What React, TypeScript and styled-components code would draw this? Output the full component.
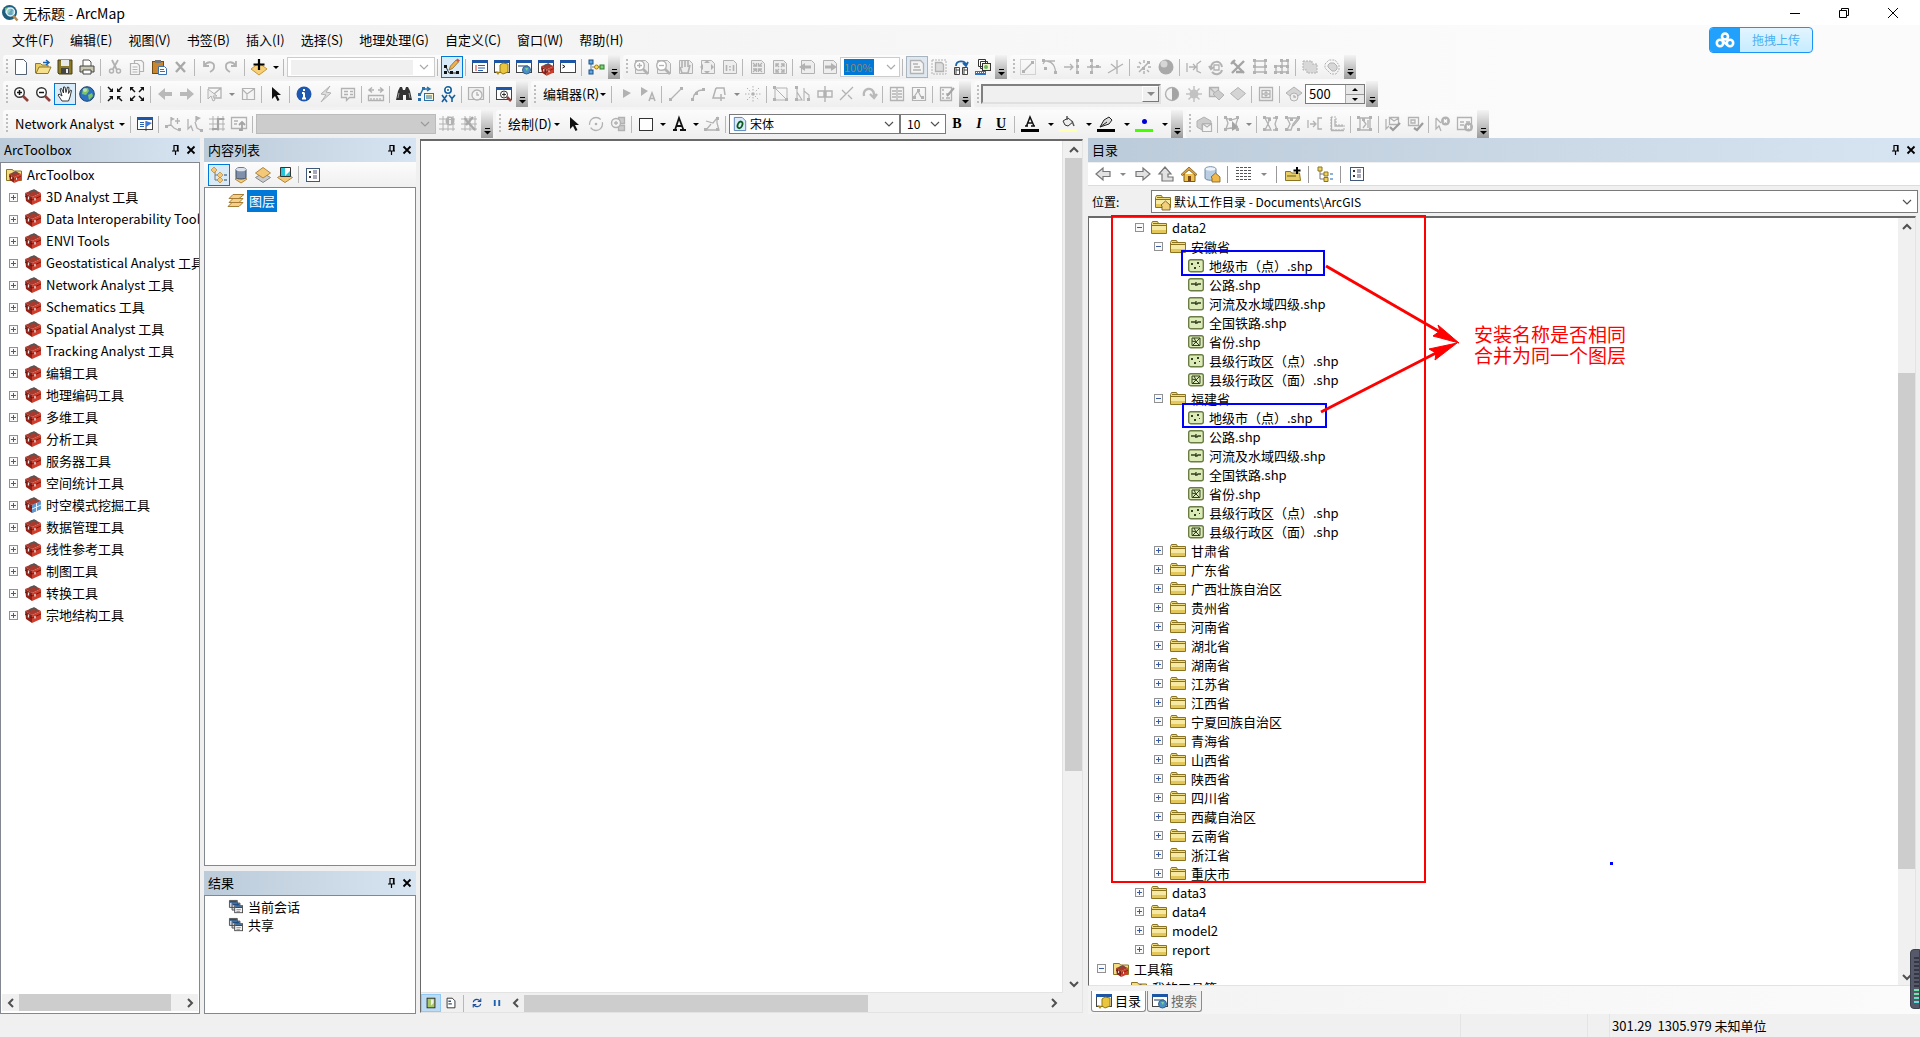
import React from 'react';
import styled, { createGlobalStyle, css } from 'styled-components';

const Global = createGlobalStyle`
  *, *::before, *::after { box-sizing: border-box; }
  body { margin: 0; background: #f0f0f0; overflow: hidden; }
  body, button, select, input {
    font-family: "Noto Sans CJK SC", "Noto Sans", sans-serif;
    font-size: 13px;
    line-height: 18px;
    color: #000;
  }
  button { border: 0; padding: 0; background: none; }
  ul { list-style: none; margin: 0; padding: 0; }
  svg { display: block; flex: none; }
`;

/* ---------- icons ---------- */

const G = '#b2b2b2';
const L = '#d8d8d8';
const line = (d: string, stroke = G, w = 1.3, fill = 'none') => (
  <path d={d} stroke={stroke} strokeWidth={w} fill={fill} />
);
const dots = (pts: number[][], fill = G, s = 3) => (
  <>{pts.map(([x, y], i) => <rect key={i} x={x} y={y} width={s} height={s} fill={fill} />)}</>
);
const win = (
  <>
    <rect x=".5" y="1.5" width="15" height="12" fill="#fff" stroke="#444" />
    <rect x="0" y="1" width="16" height="3" fill="#1d56a5" />
  </>
);
const folder = (
  <>
    <path d="M.5 13.5V3.5l1-2h5l1 2h8v10z" fill="#f0dc82" stroke="#8a7420" />
    <path d="M1 5.500h14M2 3.500h13" stroke="#8a7420" />
    <path d="M1 6h14v4H1z" fill="#f6e9a4" />
    <path d="M1 10h14v3H1z" fill="#e3c75a" />
  </>
);
const toolbox = (
  <>
    <path d="M0 4l9-3.500L16 4 7 8z" fill="#a8392c" />
    <path d="M0 4l7 4v8l-6-4z" fill="#8f2117" />
    <path d="M7 8l9-4v8l-9 4z" fill="#cf3e2c" />
    <path d="M7 11l9-4" stroke="#7c1a10" />
    <path d="M0 7l7 4" stroke="#5f130c" />
    <path d="M5 4.500V2.500L9 1l2 1v2" fill="none" stroke="#555" strokeWidth="1.300" />
    <path d="M3.500 7.500v3M10 9v2.500" stroke="#e6e6e6" strokeWidth="1.400" />
  </>
);
const shpBox = <rect x=".7" y="1.700" width="14.600" height="12" rx="2" fill="#dcebb8" stroke="#6a7d45" strokeWidth="1.400" />;
const mag = (c: string, s: string, mid: React.ReactNode) => (
  <>
    <circle cx="6.500" cy="6.500" r="4.800" fill="#fff" stroke={c} strokeWidth="1.400" />
    <path d="M10 10l5 5" stroke={s} strokeWidth="2.600" />
    {mid}
  </>
);
const page = <path d="M2.500 1.500h10l3 3v10h-13z" fill="#eee" stroke={G} />;
const grid = line('M4 0v15M9 0v15M14 0v15M0 3h16M0 8h16M0 13h16', G, 1);
const poly = line('M2 2l5 2 7-2-2 6 2 5-7-1-5 1 2-6z', G);
const polyDots = dots([[0, 0], [12, 0], [0, 12], [12, 12], [5, 2]]);
const pointer = (c: string) => <path d="M4 1v12l3-3 2.500 5 2-1-2.500-5H13z" fill={c} />;
const optionsList = (
  <>
    <rect x="1.500" y="1.500" width="13" height="13" fill="#fff" stroke="#3d5878" />
    <path d="M4 5h2M4 10h2" stroke="#333" strokeWidth="2" />
    <path d="M8 4h4M8 6h4M8 9h4M8 11h4" stroke="#557" />
  </>
);

const ICONS: Record<string, React.ReactNode> = {
  logo: <><circle cx="7.500" cy="7.500" r="7.500" fill="#1e5f7d" /><path d="M3 3l4-1 2 3-3 4-3-1zM10 6l3 1-2 4z" fill="#71bf7c" /><circle cx="8.500" cy="7" r="4" fill="#9fd3ee" fillOpacity=".6" stroke="#dff1fa" strokeWidth="1.500" /><path d="M11 10.500l4.500 5" stroke="#b08a5a" strokeWidth="2.500" /></>,
  new: <path d="M2.500.5h8l3 3v12h-11z" fill="#fdfeff" stroke="#536273" />,
  open: <><path d="M.5 14V4.500h5L7 6h6v3" fill="#e8cc68" stroke="#8f7927" /><path d="M1 14.500L4 8h12l-3 6.500z" fill="#f6df8d" stroke="#8f7927" /><path d="M8 3.500h5M11 1l3 2.500L11 6" fill="none" stroke="#1d62ae" strokeWidth="1.500" /></>,
  save: <><path d="M1 1h14v14H2l-1-1z" fill="#8b7a28" stroke="#453d15" /><rect x="4" y="1" width="8" height="6" fill="#e8e8e8" /><rect x="4" y="9" width="8" height="6" fill="#444" /><rect x="9" y="10" width="2" height="4" fill="#eee" /></>,
  print: <><path d="M4 7V1h6l2 2v4" fill="#fff" stroke="#555" /><path d="M1 7h14v6H1z" fill="#c9c7b0" stroke="#444" /><path d="M4 11h8v4H4z" fill="#fff" stroke="#444" /></>,
  cut: <>{line('M5 1l5 10M11 1L6 10', G, 1.8)}<circle cx="4.500" cy="12" r="2" fill="none" stroke={G} strokeWidth="1.500" /><circle cx="11.500" cy="12" r="2" fill="none" stroke={G} strokeWidth="1.500" /></>,
  copy: <>{line('M5.500 1.500h7l2 2v9h-9z', G, 1.2, '#f6f6f6')}{line('M1.500 4.500h7l2 2v9h-9zM3.500 8h5M3.500 10.500h5M3.500 13h5', G, 1.2, '#f6f6f6')}</>,
  paste: <><rect x="1.500" y="2.500" width="11" height="12" fill="#c9862c" stroke="#6e4b17" /><rect x="4" y="1" width="6" height="3" fill="#777" /><path d="M7.500 7.500h6l2 2v6h-8z" fill="#fff" stroke="#3e6fae" /><path d="M9 10.500h4M9 12.500h5" stroke="#3e6fae" /></>,
  delete: line('M3 3l9 10M12 3L3 13', '#a9a9a9', 2.4),
  undo: line('M3 2v5h5M3 7c4-6 11-4 10 1 0 2-2 4-4 5', G, 1.8),
  redo: line('M13 2v5H8M13 7C9 1 2 3 3 8c0 2 2 4 4 5', G, 1.8),
  addData: <><path d="M8 4l8 6-8 6-8-6z" fill="#f6cf76" stroke="#c9963a" /><path d="M8 0v11M2.500 5.500h11" stroke="#000" strokeWidth="2.200" /></>,
  editorTool: <><path d="M2 8l3 6h8" stroke="#333" fill="none" />{dots([[0, 12], [6, 12], [12, 12], [0, 6]], '#111')}<path d="M5 11l1.500-4L12 1l2.500 2-6 6.500z" fill="#efb14b" stroke="#7e5a23" strokeWidth=".7" /><path d="M12 1l1.500-1.500L16 1.500 14.500 3z" fill="#d25548" /></>,
  tableWin: <>{win}<path d="M3 7h2M3 9h2M3 11h2" stroke="#d33" /><path d="M6 6.500h7M6 9h7M6 11.500h5" stroke="#2b62b0" /></>,
  catalogWin: <>{win}<path d="M6 6l3-2 5 1v8l-5 2-3-2z" fill="#e9c63e" stroke="#937a13" /><path d="M1 12l5 1-2 3z" fill="#b08a17" /></>,
  searchWin: <>{win}<path d="M2 7h10" stroke="#8a9ab0" strokeWidth="2" /><circle cx="10.500" cy="11" r="4" fill="#4a90c8" stroke="#36628a" /><path d="M9 9l3 0-1 3z" fill="#7ed08a" /></>,
  toolboxWin: <>{win}<g transform="translate(3 4) scale(.8)">{toolbox}</g></>,
  pythonWin: <>{win}<path d="M2.500 6l2.500 1.500L2.500 9" stroke="#111" fill="none" /></>,
  model: <><path d="M3 3v10M4 8h9" stroke="#5b7f9f" /><rect x="1" y="1" width="4" height="4" fill="#5fa8e8" stroke="#1d4f86" /><rect x="1" y="11" width="4" height="4" fill="#5fa8e8" stroke="#1d4f86" /><circle cx="8.500" cy="8" r="2" fill="#ffd84f" stroke="#a58012" /><rect x="12" y="6" width="4" height="4" fill="#7fd07c" stroke="#2f7d2d" /></>,
  gZoomIn: <>{page}{mag(G, G, line('M4 6.500h5M6.500 4v5'))}</>,
  gZoomOut: <>{page}{mag(G, G, line('M4 6.500h5'))}</>,
  gPan: <>{page}{line('M3 8l2 6h6l2-8M5 9V2M8 8V1M11 8V2', G, 1.6)}</>,
  gFull: <>{page}<path d="M8 1l3 3H5zM8 15l3-3H5zM1 8l3-3v6zM15 8l-3-3v6z" fill={G} /></>,
  gOne: <>{page}<path d="M5.500 6v6M12.500 6v6M9 7v1.500M9 10v1.500" stroke={G} strokeWidth="1.600" /></>,
  gIn: <>{page}{line('M4 4l3 3M13 4l-3 3M4 13l3-3M13 13l-3-3M7.500 4v3H4M9.500 4v3H13M7.500 13v-3H4M9.500 13v-3H13')}</>,
  gOut: <>{page}{line('M5 5l3 3M13 5l-3 3M5 13l3-3M13 13l-3-3M5 8V5h3M10 5h3v3M5 10v3h3M13 10v3h-3')}</>,
  gPrev: <>{page}<path d="M0 8l6-4v2.500h6v3H6V12z" fill={G} /></>,
  gNext: <>{page}<path d="M16 8l-6-4v2.500H4v3h6V12z" fill={G} /></>,
  gToggle: line('M1.500 1.500h10l3 3v10h-13zM4 5h5M4 11h8M5 8h6', G, 1.3, '#f4f4f4'),
  gFocus: <><rect x="1" y="1" width="14" height="14" fill="none" stroke={G} strokeDasharray="2 1" />{line('M4.500 3.500h6l2 2v7h-8z', G, 1.3, '#ddd')}</>,
  change: <><path d="M3 7c0-6 9-6 10-1M10 4l3 3 2-4" fill="none" stroke="#1d62ae" strokeWidth="1.800" /><path d="M1.500 8.500h5v7h-5zM9.500 8.500h5v7h-5zM3 8.500v7M11 8.500v7M3 11h3M11 11h3" fill="#fff" stroke="#444" /></>,
  ddp: <><path d="M3.500.5h7v7h-7zM5.500 2.500h7v7h-7z" fill="#fff" stroke="#333" /><rect x="7.500" y="4.500" width="8" height="7" fill="#f1f6c8" stroke="#333" /><circle cx="11" cy="8" r="2" fill="#6cb865" /><rect x="0" y="12" width="11" height="4" fill="#2b72c8" /><path d="M1 13.500h9" stroke="#fff" strokeDasharray="1 1" /></>,
  feLine: <><rect x=".5" y=".5" width="15" height="15" fill="none" stroke={G} strokeDasharray="1 1" />{line('M4 12l8-8')}{dots([[2, 11], [11, 2]])}</>,
  feArc: <>{line('M1 2h12M5 2c6 1 8 5 9 13M1 5l2-3')}{dots([[0, 0], [2, 8], [12, 12]])}</>,
  feSnap: <>{line('M0 8h8M6 5l3 3-3 3M13 1v14')}{dots([[12, 0], [12, 6], [12, 12]])}</>,
  feCross: <>{line('M1 8h14M6 1v14')}{dots([[4, 6], [10, 6], [4, 0], [4, 12]])}</>,
  feTrim: <>{line('M0 14L15 5M9 1v14M3 5l5 4')}</>,
  feBurst: <><g stroke={G} strokeWidth="1.500"><path d="M8 1v3M1 8h3M8 12v3M12 8h3M3 3l2 2M11 11l2 2M3 13l9-9" /></g>{dots([[11, 2], [6, 8]])}</>,
  feBall: <><circle cx="8" cy="8" r="7.500" fill="#a9a9a9" /><circle cx="6" cy="5" r="3.500" fill="#d6d6d6" /></>,
  feMove: <>{line('M1 4v9M3 8h6M7 5l3 3-3 3M15 2l-4 3v7l4 2')}</>,
  feRotate: <>{line('M3 9c0-8 10-8 11-1M4 13c4 4 9 2 10-2M1 7l2 3 3-2', G, 2)}{line('M6 6h5v5H6z')}</>,
  feTools: line('M2 2l12 12M14 2L2 14M1 5l4-4M6 13h8', '#a4a4a4', 2.4),
  feAlign: <>{line('M2 2h12M2 8h12M2 13h12M3 2v11M13 2v11')}{dots([[1, 0], [12, 0], [1, 6], [12, 6], [1, 12], [12, 12]])}</>,
  feGrid: <>{line('M2 7h12M2 13h12M8 2v12M2 7v7M14 2v12M8 2h6')}{dots([[6, 0], [12, 0], [0, 6], [6, 6], [12, 6], [0, 12], [6, 12], [12, 12]])}</>,
  feUnion: <path d="M1 2h9v3h5v9H5v-3H1z" fill={L} stroke={G} strokeDasharray="2 1" />,
  feBuffer: <><path d="M1 5l4-4h6l4 5v5l-3 4H7L1 9z" fill="none" stroke={G} strokeDasharray="2 1" /><path d="M4 6l2-2h4l3 3v3l-2 2H8L4 8z" fill={L} stroke={G} /></>,
  zoomIn: mag('#333', '#8f3f3a', line('M4 6.500h5M6.500 4v5', '#111', 1.5)),
  zoomOut: mag('#333', '#8f3f3a', line('M4 6.500h5', '#111', 1.5)),
  pan: <path d="M5 15L1 9l1-1 3 2-2-7 1.500-.5L6.500 7 6.500 1 8 1l1 5.500L10.500 1l1.500.5-.5 6L13.500 4l1 .5L13 11l-1.500 4z" fill="#fff" stroke="#222" strokeWidth=".9" />,
  globe: <><circle cx="8" cy="8" r="7.300" fill="#2c72c4" stroke="#1a4172" /><path d="M4 3l5-1 1 3-3 4-4-1zM9 9l4-2 1 3-4 4z" fill="#7fc55d" /><circle cx="6" cy="4" r="2" fill="#fff" fillOpacity=".5" /></>,
  fixIn: <g fill="#111" stroke="#111"><path d="M1 1l4 4M15 1l-4 4M1 15l4-4M15 15l-4-4" strokeWidth="1.500" /><path d="M6 2v4H2zM10 2v4h4zM6 14v-4H2zM10 14v-4h4z" stroke="none" /></g>,
  fixOut: <g fill="#111" stroke="#111"><path d="M2 2l4 4M14 2l-4 4M2 14l4-4M14 14l-4-4" strokeWidth="1.500" /><path d="M1 5V1h4zM15 5V1h-4zM1 11v4h4zM15 11v4h-4z" stroke="none" /></g>,
  prev: <path d="M1 8l7-6v4h7v4H8v4z" fill="#b9b9b9" />,
  next: <path d="M15 8L8 2v4H1v4h7v4z" fill="#b9b9b9" />,
  gSelect: <>{line('M1 2h13v10H7M14 2L7 8')}<path d="M1 3v10l3-3 2 5 2-1-2-4h4z" fill="#eee" stroke={G} /></>,
  gClear: line('M2.500 2.500h12v11h-12zM2 3l5 5 7-5M7 8v5', G, 1.2, '#f4f4f4'),
  pointer: pointer('#111'),
  info: <><circle cx="8" cy="8" r="7.500" fill="#1d57b0" /><path d="M8 6.500V13M6 7h2M6 12.500h4M8 3v2" stroke="#fff" strokeWidth="2" /></>,
  bolt: <path d="M12 0L3 8l5 1-5 7 10-9-5-1z" fill="#ddd" stroke={G} />,
  popup: line('M1.500 2.500h13v9h-5l-3 3v-3h-5zM4 5.500h4M4 8.500h4M10 5.500h3M10 8.500h3', G, 1.3),
  measure: <>{line('M1 4h5M10 4h5M4 1.500L1 4l3 2.500M12 1.500L15 4l-3 2.500', G, 1.5)}{line('M.5 9.500h15v5H.5zM3 12v2M6 12v2M9 12v2M12 12v2')}</>,
  find: <><path d="M2 5l2-4h2l1 3h2l1-3h2l2 4 2 9h-6V9H7v5H0z" fill="#333" /><path d="M2 12l1-5M13 7l1 5" stroke="#999" /></>,
  route: <><path d="M2 9l3-6h6M9 1l3 2-3 2" fill="none" stroke="#2a6fa8" strokeWidth="1.500" /><rect x="6.500" y="7.500" width="9" height="7" fill="#fdf6cf" stroke="#2a6fa8" /><path d="M8 10h6M8 12h6" stroke="#2a6fa8" />{dots([[0, 7], [0, 12], [4, 1]], '#2a6fa8')}</>,
  goXY: <><circle cx="8" cy="4" r="3.200" fill="#fff" stroke="#16609f" strokeWidth="1.600" /><circle cx="8" cy="4" r="1" fill="#16609f" /><path d="M2 9l5 7M7 9l-5 7M9 9l3 3.500L15 9M12 12v4" stroke="#16609f" strokeWidth="1.600" fill="none" /></>,
  clockWin: <>{line('M.5 1.500h15v12H.5z', G, 1.2, '#eee')}<circle cx="9" cy="9" r="5" fill="#f5f5f5" stroke={G} strokeWidth="1.300" />{line('M9 6v3h2')}</>,
  magWin: <>{win}<circle cx="8" cy="8.500" r="3.500" fill="#fff" stroke="#333" /><path d="M6 8.500h4M8 6.500v4" stroke="#333" /><path d="M11 11l4 4" stroke="#8f3f3a" strokeWidth="2.500" /></>,
  gArrow: <path d="M5 3v9l8-5z" fill={G} />,
  gArrowA: <><path d="M1 1v9l7-5z" fill={G} />{line('M9 15l3-8 3 8M10 12.500h4', G, 1.5)}</>,
  gLine: <>{line('M3 13L13 3')}{dots([[1, 12], [12, 1]])}</>,
  gCurve: <>{line('M3 13c1-6 4-9 10-9')}{dots([[1, 12], [12, 2], [5, 6]])}</>,
  gTrace: line('M4 2h8l1 7M4 2L1 12h6M9 8v7M6 12h7', G, 1.5),
  gPoint: <><circle cx="8" cy="8" r="1.800" fill={G} /><g stroke={G} strokeDasharray="1.500 1.500"><path d="M8 0v5M8 11v5M0 8h5M11 8h5M2 2l4 4M10 10l4 4M14 2l-4 4M2 14l4-4" /></g></>,
  gEditV: <>{line('M2 14V2l12 12H2M2 2h12v12', G, 1)}{dots([[0, 0], [0, 12], [12, 12]])}</>,
  gReshape: <>{line('M2 1v13h5l-5-8M9 2v13M9 5l5 4v6', G, 1.1)}{dots([[0, 0], [0, 12], [12, 12]])}</>,
  gCutP: line('M1 5h6v6H1zM9 5h6v6H9zM8 0v16', G, 1.4),
  gSplit: line('M1 14L14 1M3 4l4 4M9 9l4 4', G, 1.3),
  gRot: line('M3 10c-2-8 9-10 10-2v3M9 8l4 4 3-4', '#b9b9b9', 2.4),
  gAttr: line('M1.500 1.500h13v13h-13zM8 2v12M3 5h4M3 8h4M3 11h4M9 5h4M9 8h4M9 11h4'),
  gSketch: <>{line('M1.500 1.500h13v13h-13zM3 11l4-6 3 6', G, 1.2)}{dots([[2, 10], [6, 3], [10, 10]])}</>,
  gCreate: <>{line('M1.500 1.500h11v13h-11zM3 4h2M3 8h2M3 12h2M7 8h4M7 12h4')}{line('M8 10l7-8', '#a4a4a4', 2)}</>,
  contrast: <><circle cx="8" cy="8" r="6.500" fill="#f4f4f4" stroke={G} strokeWidth="1.400" /><path d="M8 1.500a6.500 6.500 0 010 13z" fill="#a4a4a4" /></>,
  sun: <><circle cx="8" cy="8" r="4.500" fill="#c2c2c2" />{line('M8 0v16M0 8h16M2.500 2.500l11 11M13.500 2.500l-11 11', '#c2c2c2', 1.5)}</>,
  swipe: <>{line('M1.500 1.500h9v9h-9zM2 2l9 9', G, 1.3, '#ddd')}<path d="M5 8l5-4 6 5-5 5z" fill="#ccc" stroke={G} /></>,
  diamond: <path d="M8 1.500l7.500 6L8 14 .5 7.500z" fill="#d4d4d4" stroke={G} />,
  flick: <>{line('M1.500 1.500h13v13h-13zM4 4.500h8v7H4zM4 8h8')}<path d="M8 5l2 2H6zM8 11l2-2H6z" fill={G} /></>,
  timer: <><path d="M8 1l8 6-8 6-8-6z" fill="#d4d4d4" stroke={G} /><circle cx="8" cy="11" r="4" fill="#eee" stroke={G} />{line('M8 9v2h2')}</>,
  naWin: <>{win}<path d="M3 6.500h4M3 8.500h4M3 10.500h4" stroke="#2b62b0" /><path d="M9 5v10" stroke="#444" /><path d="M9 5l6 2-6 4z" fill="#3d79d8" /></>,
  na1: <>{line('M1 10l5-1 3 3 6 3M6 9V1M10 5h5M12.500 2v6')}<path d="M6 1l4 2-4 2z" fill={G} />{dots([[0, 9], [13, 12]])}</>,
  na2: <>{line('M1 3v10l3-3 2 5M8 6l2 6 5 3M9 6V0')}<path d="M9 0l5 2-5 3z" fill={G} />{dots([[13, 13]])}</>,
  na3: <>{grid}{line('M3 13h6V3h6', '#a4a4a4', 2.2)}</>,
  na4: <>{line('M.5 1.500h15v11H.5zM3 5h4M3 8h3')}{line('M8 14h3V7M8 9l3-3 3 3', '#a4a4a4', 1.8)}</>,
  na5: <>{grid}<circle cx="11" cy="5" r="4.500" fill="#b2b2b2" /><path d="M11 4v4M11 2v1" stroke="#fff" strokeWidth="1.500" /></>,
  na6: <>{grid}{line('M5 4l9 10M4 2l3 5M12 1L5 9', '#a8a8a8', 2.4)}</>,
  rotateC: <><circle cx="8" cy="8" r="6.500" fill="none" stroke={G} strokeWidth="1.300" strokeDasharray="16 3" /><circle cx="8" cy="8" r="1.300" fill={G} /></>,
  zoomSel: <>{line('M8.500 1.500h6v6h-6zM8.500 9.500h6v5h-6z', G, 1.3, '#ccc')}<circle cx="6" cy="7" r="4.500" fill="#f4f4f4" stroke={G} strokeWidth="1.400" />{line('M4 7h4M6 5v4')}</>,
  rect: <rect x="1.500" y="2.500" width="13" height="12" fill="#fff" stroke="#333" />,
  textA: <path d="M2 14h4M9 14h6M4 14L8 2l4.500 12M5 10h6" stroke="#111" strokeWidth="1.800" fill="none" />,
  editVert: <>{line('M2 5l7 2 4-5v5l2 7H2l5-6')}{dots([[0, 12], [12, 12], [12, 1]])}</>,
  fontFile: <><path d="M1.500.5h9l4 4v11h-13z" fill="#dcebfb" stroke="#4b79b5" /><ellipse cx="8" cy="9" rx="2.500" ry="4" transform="rotate(25 8 9)" fill="none" stroke="#0b5c1e" strokeWidth="2" /></>,
  colorA: <><path d="M3 10h3M9 10h4M4.500 10L8 1l4 9M6 7h5" stroke="#111" strokeWidth="1.500" fill="none" /><rect x="-1" y="13" width="18" height="3" fill="#000" /></>,
  colorFill: <><path d="M3 5l5-3 5 4-5 4-3-1z" fill="#eee" stroke="#333" /><path d="M7 4V0M12 5l2 5" stroke="#555" strokeWidth="1.500" /><rect x="-1" y="13" width="18" height="3" fill="#ffffb4" /></>,
  colorLine: <><path d="M2 11l4-7 5-3 3 3-3 4zM2 11l7-5" fill="#ddd" stroke="#222" /><rect x="-1" y="13" width="18" height="3" fill="#000" /></>,
  colorMark: <><circle cx="8.500" cy="5.500" r="2.500" fill="#0000d8" /><rect x="-1" y="13" width="18" height="3" fill="#4f0" /></>,
  topo1: <><path d="M1 5l7-4 7 4v3H6v6l-5-3z" fill="#ccc" stroke={G} />{line('M6.500 7.500h9v8h-9zM7 8l4 3 4-3', G, 1.2, '#f4f4f4')}</>,
  topo2: <>{poly}{polyDots}<path d="M8 5v10l6-4z" fill="#a4a4a4" /></>,
  topo3: <>{line('M2 2h5l-2 6 3 6H2l3-6zM10 2h4l-2 6 2 6h-4')}{polyDots}</>,
  topo4: <>{line('M2 2h11l-5 6-2 6H2l3-6z')}{polyDots}{line('M8 10l6-7')}</>,
  topo5: line('M1 4v8M3 8h5M6 5l3 3-3 3M15 2h-4v11h4'),
  topo6: <>{line('M2.500 1v13.500H15M6 3v7h8')}<path d="M2 1h5v8h8v5H2z" fill="none" stroke={G} strokeDasharray="2 1" /></>,
  topo7: <>{line('M3 2h10v12H3zM6 4l3 4-3 4M11 4v8')}{polyDots}</>,
  val1: <>{line('M4.500 1.500h9v7h-9zM5 2l4 3 5-3M1 3v10l3-3')}{line('M5 11l3 3 7-7', '#9c9c9c', 2.2)}</>,
  val2: <>{line('M1.500 1.500h10v8h-10zM4 4h4v3H4z')}{line('M7 12l3 2 6-7', '#9c9c9c', 2.2)}</>,
  val3: <>{line('M1 2v11l3-3 2 5M1 2l5 5')}<circle cx="10.500" cy="5" r="4.500" fill={G} />{line('M9 3.500l3 3M12 3.500l-3 3', '#fff', 1.5)}</>,
  val4: <>{line('M.5 1.500h14v12H.5zM3 6h4M3 9h4M9 6h4')}<circle cx="11.500" cy="11" r="4.500" fill={G} />{line('M10 9.500l3 3M13 9.500l-3 3', '#fff', 1.5)}</>,
  toolbox,
  toolboxBlue: <>{toolbox}<path d="M7 8l9-4v8l-9 4z" fill="#5b9bd5" /><path d="M7 12l9-4M11.500 6v8" stroke="#e8f2fb" /></>,
  toolboxRoot: <><path d="M.5 13.500V2.500h6l1 1.500h8v9.500z" fill="#f3dc83" stroke="#8a7420" /><g transform="translate(3 4) scale(.75)">{toolbox}</g></>,
  folder,
  shpPoint: <>{shpBox}<path d="M3 5h2v2H3zM9 4h2v2H9zM6 9h2v2H6zM11 8h1v1h-1z" fill="#31401d" /></>,
  shpLine: <>{shpBox}<path d="M3 7h5v-2M7 8h2l1-1h3" stroke="#31401d" strokeWidth="1.300" fill="none" /></>,
  shpPoly: <>{shpBox}<path d="M4 4h8v7.500H4zM4 7l4 1 4-4M8 8l3 3M6 4l2 4-3 3" stroke="#31401d" fill="none" /></>,
  listOrder: <><path d="M4 4v9h5M4 8h5" stroke="#777" fill="none" /><path d="M3 0l3 3-3 3-3-3zM9 5l3 3-3 3-3-3zM9 10l3 3-3 3-3-3z" fill="#f3c878" stroke="#b3853a" strokeWidth=".7" /><path d="M13 8h3M13 13h3" stroke="#246" /></>,
  listSource: <><path d="M8 16l-6-4 6-3 6 3z" fill="#f6cf76" stroke="#b3853a" /><path d="M3 2.500C3 0 13 0 13 2.500v8c0 2-10 2-10 0z" fill="#7f90ab" stroke="#3d4a60" /><ellipse cx="8" cy="2.500" rx="5" ry="1.800" fill="#dde4ee" /></>,
  listVis: <><path d="M8 15.500l-7.500-5L8 6l7.500 4.500z" fill="#ccc" stroke="#888" /><path d="M8 11L.5 6 8 .5 15.500 6z" fill="#f3c878" stroke="#b3853a" /></>,
  listSel: <><path d="M8 15.500l-7.500-5L8 6l7.500 4.500z" fill="#f3c878" stroke="#b3853a" /><path d="M3.500.5h10v9h-10z" fill="#26c6da" stroke="#333" /><path d="M8 1v8l5-5V1z" fill="#fff" /></>,
  options: optionsList,
  layers: <g fill="#f2cf8b" stroke="#a87c32"><path d="M0 13.500l4-4h11l-4 4zM1 9.500l4-4h10l-4 4zM1 5.500l4-4h11l-5 4z" /></g>,
  results: <><path d="M.5.5h9v8h-9zM3.500 3.500h9v8h-9z" fill="#cfd6df" stroke="#444" /><rect x="6.500" y="6.500" width="9" height="8" fill="#f3f3f3" stroke="#444" /><path d="M1 2h8M4 5h8M7 8h8" stroke="#1d4f86" strokeWidth="2" /><path d="M8.500 11h5M8.500 13h4" stroke="#888" /></>,
  back: <path d="M1 8l7-6v3.500h7v5H8V14z" fill="#e2e2e2" stroke="#777" strokeWidth="1.200" />,
  forward: <path d="M15 8L8 2v3.500H1v5h7V14z" fill="#e2e2e2" stroke="#777" strokeWidth="1.200" />,
  up: <path d="M1 8l6-7 6 7h-3v3h5v4H4V8z" fill="#e2e2e2" stroke="#777" strokeWidth="1.200" />,
  home: <><path d="M3 8v7.500h11V8" fill="#f0c24f" stroke="#7c5b15" /><path d="M0 8.500L8 1l8 7.500-1.500 1L8 4 1.500 9.500z" fill="#d9a441" stroke="#6e4b17" strokeWidth=".7" /><rect x="7" y="10" width="3" height="5" fill="#7c4b15" /></>,
  homeDb: <><path d="M1 3c0-3 11-3 11 0v9c0 3-11 3-11 0z" fill="#b9cde3" stroke="#6d87a5" /><ellipse cx="6.500" cy="3" rx="5" ry="1.700" fill="#eef4fa" /><path d="M7 11l4.500-4L16 11v5H8v-4z" fill="#f0b94a" stroke="#7c5b15" strokeWidth=".8" /></>,
  details: <path d="M0 1.500h16M0 4.500h16M0 7.500h16M0 10.500h16M0 13.500h16" stroke="#555" strokeDasharray="3 1" />,
  connect: <><path d="M.5 14.500v-9h5l1 1.500h8l1 7.500z" fill="#e8cc68" stroke="#8a7420" /><path d="M2 10h9" stroke="#6b5a18" /><path d="M12 1v7M8.500 4.500h7" stroke="#000" strokeWidth="2" /></>,
  treeView: <><path d="M3 4v9h5M3 8h5" stroke="#777" fill="none" /><path d="M1 1h4v4H1zM7 6h4v4H7zM7 11.500h4v4H7z" fill="#f0d35e" stroke="#8a7420" /><path d="M13 8h3M13 13h3" stroke="#1d62ae" /></>,
  folderHome: <>{folder}<path d="M6 11l4.500-4L15 11v5H7v-4z" fill="#f0d07a" stroke="#6e4b17" strokeWidth=".8" /></>,
  dataView: <><rect x="3.500" y="2.500" width="9" height="11" fill="#a9c869" stroke="#222" /><path d="M8 4l3 0v4l-3 3z" fill="#eee" /></>,
  layoutView: <><path d="M3.500 2.500h6l3 3v8h-9z" fill="#fff" stroke="#222" /><path d="M5 6h3M5 9h4" stroke="#357" strokeWidth="1.500" /></>,
  refresh: line('M3 7c1-5 8-5 9-1M13 2v4H9M13 9c-1 5-8 5-9 1M3 14v-4h4', '#1d4f9c', 1.5),
  pause: <path d="M5 4v8M11 4v8" stroke="#1d62ae" strokeWidth="2.500" />,
};

const Icon = ({ name, size = 16 }: { name: string; size?: number }) => (
  <svg width={size} height={size} viewBox="0 0 16 16" overflow="visible" aria-hidden="true">{ICONS[name]}</svg>
);

const PATHS = { up: 'M1 7l4-4 4 4', down: 'M1 3l4 4 4-4', left: 'M7 1L3 5l4 4', right: 'M3 1l4 4-4 4' };
const Chevron = ({ dir, width = 2, color = '#505050' }: { dir: keyof typeof PATHS; width?: number; color?: string }) => (
  <svg width="10" height="10" viewBox="0 0 10 10" aria-hidden="true"><path d={PATHS[dir]} fill="none" stroke={color} strokeWidth={width} /></svg>
);

/* ---------- shell ---------- */

const Shell = styled.div`
  display: flex;
  flex-direction: column;
  height: 100vh;
  background: #f0f0f0;
`;

const TitleBar = styled.header`
  display: flex;
  align-items: center;
  height: 25px;
  padding: 0 5px 0 2px;
  gap: 5px;
  background: #fff;
  h1 { margin: 0; flex: 1; font-size: 14px; font-weight: 400; }
`;

const WinButton = styled.button`
  width: 44px;
  height: 24px;
  display: grid;
  place-items: center;
`;

const Top = styled.div`
  background: linear-gradient(90deg, #f0f0f0, #fbfbfb 80%);
`;

const MenuBar = styled.nav`
  display: flex;
  align-items: center;
  height: 30px;
  padding: 0 107px 0 12px;
  gap: 16px;
`;

const MenuItem = styled.button` white-space: nowrap; `;

const Upload = styled.button`
  display: flex;
  margin-left: auto;
  height: 26px;
  border: 1px solid #1a94f8;
  border-radius: 4px;
  overflow: hidden;
  background: linear-gradient(#e2f5ff, #c6ecff);
  font-size: 12px;
  line-height: 24px;
  color: #4ab0f2;
  span { padding: 0 12px; }
  i { display: grid; place-items: center; width: 30px; background: #22a1fc; }
`;

const ToolRow = styled.div<{ $h: number; $gap?: number }>`
  display: flex;
  gap: 3px;
  height: ${p => p.$h}px;
  margin-bottom: ${p => p.$gap ?? 0}px;
  padding-left: 3px;
`;

const Bar = styled.div`
  display: flex;
  align-items: center;
  padding-left: 7px;
  border-radius: 3px 0 0 3px;
  background:
    repeating-linear-gradient(#bdbdbd 0 2px, transparent 2px 4px) 3px 4px / 2px calc(100% - 8px) no-repeat,
    linear-gradient(#fcfcfc, #efefef);
`;

const Tool = styled.button<{ $active?: boolean; $soft?: boolean; $wide?: boolean }>`
  display: grid;
  place-items: center;
  width: ${p => (p.$wide ? 27 : 22)}px;
  height: 22px;
  ${p => p.$wide && css`padding-right: 4px;`}
  ${p => p.$active && css`background: #d9ebf9; border: 1px solid #0078d7;`}
  ${p => p.$soft && css`background: #dfe8f0; border: 1px solid #a8b4bf;`}
`;

const Sep = styled.span`
  width: 1px;
  height: 17px;
  margin: 0 3px 0 2px;
  background: #b8b8b8;
`;

const Drop = styled.button<{ $dim?: boolean }>`
  width: 11px;
  height: 22px;
  display: grid;
  place-items: center;
  &::after {
    content: "";
    border: 3px solid transparent;
    border-top: 3px solid ${p => (p.$dim ? '#888' : '#000')};
    border-bottom: 0;
  }
`;

const More = styled.button`
  align-self: stretch;
  display: grid;
  place-items: end center;
  width: 12px;
  margin-left: 1px;
  padding-bottom: 3px;
  background: linear-gradient(#f4f4f4, #9c9c9c);
`;

const TextTool = styled.button<{ $w: number }>`
  display: flex;
  align-items: center;
  justify-content: space-between;
  width: ${p => p.$w}px;
  padding: 0 3px 0 5px;
  white-space: nowrap;
  &::after {
    content: "";
    border: 3px solid transparent;
    border-top-color: #000;
    border-bottom: 0;
  }
`;

const Combo = styled.label<{ $w?: number; $h?: number; $tone?: string }>`
  display: flex;
  align-items: center;
  ${p => (p.$w ? css`width: ${p.$w}px;` : css`flex: 1;`)}
  height: ${p => p.$h ?? 20}px;
  padding: 0 5px 0 3px;
  border: 1px solid ${p => (p.$tone === 'dim' ? '#ccc' : '#7a7a7a')};
  background: ${p => (p.$tone === 'grey' ? '#ccc' : p.$tone === 'sunk' ? '#f0f0f0' : '#fff')};
  ${p => p.$tone === 'grey' && css`border-color: #bbb;`}
  ${p => p.$tone === 'sunk' && css`border: 2px solid; border-color: #808080 #e0e0e0 #e0e0e0 #808080; padding: 0;`}
  select {
    flex: 1;
    min-width: 0;
    appearance: none;
    border: 0;
    padding: 0 0 0 3px;
    background: transparent;
    line-height: 16px;
    font-size: 12px;
    outline: 0;
    opacity: 1;
  }
`;

const BlankSelect = styled.select` && { background: #f0f0f0; margin: 0 6px 0 0; height: 15px; } `;
const ZoomSelect = styled.select` && { background: #0078d7; color: #94816f; flex: none; width: 30px; padding: 0; margin-right: 12px; font-size: 11px; } `;

const SunkButton = styled.span`
  display: grid;
  place-items: center;
  width: 17px;
  height: 16px;
  background: #f0f0f0;
  border: 1px solid;
  border-color: #fff #777 #777 #fff;
  &::after { content: ""; border: 4px solid transparent; border-top-color: #888; border-bottom: 0; }
`;

const Spinner = styled.div`
  display: flex;
  width: 60px;
  height: 20px;
  border: 1px solid #7a7a7a;
  background: #fff;
  input { width: 39px; border: 0; padding: 0 0 0 3px; background: #fff; outline: 0; }
  div { flex: 1; display: grid; background: #e8e8e8; border-left: 1px solid #aaa; }
  button { display: grid; place-items: center; height: 9px; }
  button + button { border-top: 1px solid #999; }
`;

const StyleButton = styled.button<{ $k: 'b' | 'i' | 'u' }>`
  width: 22px;
  font-family: "Liberation Serif", serif;
  font-size: 14px;
  font-weight: 700;
  font-style: ${p => (p.$k === 'i' ? 'italic' : 'normal')};
  text-decoration: ${p => (p.$k === 'u' ? 'underline' : 'none')};
`;

/* ---------- docked panels ---------- */

const Body = styled.main`
  flex: 1;
  min-height: 0;
  display: grid;
  grid-template-columns: 200px 212px minmax(0, 664px) minmax(0, 1fr);
  column-gap: 4px;
`;

const Panel = styled.section`
  display: flex;
  flex-direction: column;
  min-width: 0;
  min-height: 0;
`;

const PanelHead = styled.header`
  display: flex;
  align-items: center;
  height: 24px;
  flex: none;
  padding: 0 4px;
  gap: 5px;
  background: linear-gradient(90deg, #bccbd9, #d7e4f2);
  h2 { margin: 0; flex: 1; font-size: 13px; font-weight: 400; }
`;

const Box = styled.div`
  flex: 1;
  min-height: 0;
  display: flex;
  flex-direction: column;
  overflow: hidden;
  background: #fff;
  border: 1px solid #828790;
`;

const PanelTools = styled.div`
  display: flex;
  align-items: center;
  height: 25px;
  flex: none;
  padding: 0 4px;
  background: linear-gradient(#fcfcfc, #f0f0f0);
`;

const Tree = styled.ul`
  flex: 1;
  min-height: 0;
  min-width: 0;
  overflow: hidden;
`;

const Node = styled.li<{ $h: number; $x: number }>`
  display: flex;
  align-items: center;
  height: ${p => p.$h}px;
  padding-left: ${p => p.$x}px;
  white-space: nowrap;
`;

const Expander = styled.button`
  display: grid;
  place-items: center;
  flex: none;
  width: 9px;
  height: 9px;
  margin-right: 7px;
  border: 1px solid #919191;
  background: #fafafa;
`;

const Label = styled.span<{ $on?: boolean }>`
  margin-left: 3px;
  padding: 0 2px;
  ${p => p.$on && css`background: #0078d7; color: #fff; line-height: 22px;`}
`;

const HScroll = styled.div`
  display: flex;
  align-items: center;
  flex: 1;
  height: 17px;
  background: #f0f0f0;
`;

const VScroll = styled.div`
  display: flex;
  flex-direction: column;
  align-items: center;
  width: 17px;
  flex: none;
  background: #f0f0f0;
`;

const ScrollButton = styled.button`
  display: grid;
  place-items: center;
  width: 17px;
  height: 17px;
  flex: none;
`;

const Space = styled.span<{ $grow: number }>` flex: ${p => p.$grow} 1 0; `;
const Thumb = styled.span<{ $grow: number }>`
  flex: ${p => p.$grow} 1 0;
  align-self: stretch;
  background: #cdcdcd;
`;

const HRow = styled.div` display: flex; flex: none; padding: 0 1px 2px; `;

const Results = styled(Panel)` flex: none; height: 143px; margin-top: 5px; `;
const ResultTree = styled(Tree)` padding-top: 2px; `;

const MapFrame = styled.section`
  display: flex;
  flex-direction: column;
  min-height: 0;
  margin: 1px 1px 1px 0;
  border: 2px solid;
  border-color: #696969 #e3e3e3 #e3e3e3 #696969;
  border-width: 2px 1px 1px 1px;
`;
const MapMain = styled.div` display: flex; flex: 1; min-height: 0; ${VScroll} { padding-bottom: 2px; } `;
const Canvas = styled.div` flex: 1; background: #fff; border: solid #e3e3e3; border-width: 0 1px 1px 0; margin: 0 2px 1px 0; `;
const MapBar = styled.div` display: flex; align-items: center; height: 18px; padding-right: 20px; `;
const MapTool = styled.button<{ $active?: boolean }>`
  display: grid;
  place-items: center;
  width: 20px;
  height: 18px;
  ${p => p.$active && css`background: #bddcf4; border: 1px solid #90c8f6;`}
`;

const CatalogTools = styled.div`
  display: flex;
  align-items: center;
  height: 23px;
  margin: 1px 0 4px;
  flex: none;
  padding-left: 3px;
  background: #fff;
  border-bottom: 1px solid #dcdcdc;
  ${Tool} { width: 23px; }
  ${Drop} { width: 17px; }
  ${Sep} { margin: 0 4px; background: #999; }
`;

const Location = styled.div`
  display: flex;
  align-items: center;
  flex: none;
  padding: 0 2px 0 4px;
  margin-bottom: 3px;
  & > label:first-child { width: 59px; font-size: 12px; }
`;

const CatalogBox = styled(Box)`
  flex-direction: row;
  margin-right: 4px;
  border-top: 2px solid #696969;
  border-left-color: #696969;
  border-right-color: #e3e3e3;
  border-bottom-color: #e3e3e3;
`;

const Tabs = styled.div`
  display: flex;
  flex: none;
  gap: 1px;
  height: 28px;
  padding: 5px 3px 2px;
  background: linear-gradient(90deg, #f3f3f3, #fbfbfb);
`;

const Tab = styled.button<{ $on?: boolean }>`
  display: flex;
  align-items: center;
  gap: 3px;
  padding: 0 4px;
  border: 1px solid #8c8c8c;
  border-top: 0;
  border-radius: 0 0 3px 3px;
  background: ${p => (p.$on ? '#fff' : '#f0f0f0')};
  color: ${p => (p.$on ? '#000' : '#6d6d6d')};
`;

const Status = styled.footer`
  display: flex;
  height: 23px;
  flex: none;
  justify-content: flex-end;
  line-height: 24px;
  span { border-left: 1px solid #e4e4e4; }
  span:nth-child(1) { width: 127px; }
  span:nth-child(2) { width: 22px; }
  span:nth-child(3) { width: 311px; padding-left: 2px; white-space: pre; }
`;

/* notes drawn over the catalog tree */
const Frame = styled.div<{ $c: string; $x: number; $y: number; $w: number; $h: number }>`
  position: absolute;
  left: ${p => p.$x}px;
  top: ${p => p.$y}px;
  width: ${p => p.$w}px;
  height: ${p => p.$h}px;
  border: 2px solid ${p => p.$c};
  pointer-events: none;
`;
const Arrows = styled.svg` position: absolute; left: 230px; top: 40px; pointer-events: none; `;
const Note = styled.p`
  position: absolute;
  left: 386px;
  top: 107px;
  margin: 0;
  font-size: 19px;
  line-height: 21px;
  color: #f00;
`;
const Dot = styled.span` position: absolute; left: 522px; top: 646px; width: 3px; height: 3px; background: #00f; `;
const CatalogBody = styled.div` position: relative; flex: 1; min-height: 0; display: flex; `;

const Meter = styled.div`
  position: absolute;
  right: 0;
  bottom: 28px;
  width: 10px;
  height: 60px;
  border-radius: 4px 0 0 4px;
  border: 1px solid #3d404d;
  background: repeating-linear-gradient(transparent 0 2px, #555969 2px 4px) 3px 7px / 5px 46px no-repeat,
    linear-gradient(#333844 0 30px, #6fe3a8 30px 38px, #63dce0) 3px 7px / 5px 46px no-repeat, #555969;
`;

/* ---------- parts ---------- */

const Tools = ({ list, active, soft, wide }: { list: string; active?: string; soft?: string; wide?: boolean }) => (
  <>
    {list.split(' ').map((n, i) =>
      n === '|' ? <Sep key={i} /> :
      n === 'v' ? <Drop key={i} aria-label="更多" /> :
      n === 'd' ? <Drop key={i} $dim aria-label="更多" /> :
      <Tool key={i} aria-label={n} $active={n === active} $soft={n === soft} $wide={wide}><Icon name={n} /></Tool>
    )}
  </>
);

const Overflow = () => (
  <More aria-label="工具条选项">
    <svg width="7" height="7" viewBox="0 0 7 7"><path d="M1 .5h5" stroke="#000" /><path d="M0 3h7L3.500 6.500z" fill="#000" /></svg>
  </More>
);

const Plus = ({ open }: { open?: boolean }) => (
  <Expander aria-label={open ? '折叠' : '展开'}>
    <svg width="5" height="5" viewBox="0 0 5 5"><path d={open ? 'M0 2.500h5' : 'M0 2.500h5M2.500 0v5'} stroke="#3b5ba5" /></svg>
  </Expander>
);

const Head = ({ title }: { title: string }) => (
  <PanelHead>
    <h2>{title}</h2>
    <button aria-label="自动隐藏"><svg width="10" height="10" viewBox="0 0 10 10"><path d="M3 .5h4v5M3 0v6M1 6h7M4.500 6v4M6.500 1v5" fill="none" stroke="#000" strokeWidth="1.200" /></svg></button>
    <button aria-label="关闭"><svg width="10" height="10" viewBox="0 0 10 10"><path d="M1.500 1.500l7 7M8.500 1.500l-7 7" stroke="#000" strokeWidth="1.800" /></svg></button>
  </PanelHead>
);

const TOOLBOXES = ['3D Analyst 工具', 'Data Interoperability Tools', 'ENVI Tools', 'Geostatistical Analyst 工具', 'Network Analyst 工具', 'Schematics 工具', 'Spatial Analyst 工具', 'Tracking Analyst 工具', '编辑工具', '地理编码工具', '多维工具', '分析工具', '服务器工具', '空间统计工具', '时空模式挖掘工具', '数据管理工具', '线性参考工具', '制图工具', '转换工具', '宗地结构工具'];

const LAYERS: [string, string][] = [
  ['shpPoint', '地级市（点）.shp'], ['shpLine', '公路.shp'], ['shpLine', '河流及水域四级.shp'], ['shpLine', '全国铁路.shp'],
  ['shpPoly', '省份.shp'], ['shpPoint', '县级行政区（点）.shp'], ['shpPoly', '县级行政区（面）.shp'],
];
const PROVINCES = ['甘肃省', '广东省', '广西壮族自治区', '贵州省', '河南省', '湖北省', '湖南省', '江苏省', '江西省', '宁夏回族自治区', '青海省', '山西省', '陕西省', '四川省', '西藏自治区', '云南省', '浙江省', '重庆市'];

type Row = { depth: number; icon: string; text: string; state?: 'open' | 'closed' };
const CATALOG: Row[] = [
  { depth: 2, icon: 'folder', text: 'data2', state: 'open' },
  ...['安徽省', '福建省'].flatMap((p): Row[] => [
    { depth: 3, icon: 'folder', text: p, state: 'open' },
    ...LAYERS.map(([icon, text]): Row => ({ depth: 4, icon, text })),
  ]),
  ...PROVINCES.map((text): Row => ({ depth: 3, icon: 'folder', text, state: 'closed' })),
  ...['data3', 'data4', 'model2', 'report'].map((text): Row => ({ depth: 2, icon: 'folder', text, state: 'closed' })),
  { depth: 0, icon: 'toolboxRoot', text: '工具箱', state: 'open' },
  { depth: 1, icon: 'toolboxRoot', text: '我的工具箱' },
];

const MENUS = ['文件(F)', '编辑(E)', '视图(V)', '书签(B)', '插入(I)', '选择(S)', '地理处理(G)', '自定义(C)', '窗口(W)', '帮助(H)'];

export default function App() {
  return (
    <Shell>
      <Global />
      <TitleBar>
        <Icon name="logo" />
        <h1>无标题 - ArcMap</h1>
        <WinButton aria-label="最小化"><svg width="10" height="10" viewBox="0 0 10 10"><path d="M0 5.500h10" stroke="#000" /></svg></WinButton>
        <WinButton aria-label="还原"><svg width="10" height="10" viewBox="0 0 10 10"><path d="M.5 2.500h7v7h-7zM2.500 2V.5h7v7H8" fill="none" stroke="#000" /></svg></WinButton>
        <WinButton aria-label="关闭"><svg width="10" height="10" viewBox="0 0 10 10"><path d="M0 0l10 10M10 0L0 10" stroke="#000" /></svg></WinButton>
      </TitleBar>

      <Top>
        <MenuBar>
          {MENUS.map(m => <MenuItem key={m}>{m}</MenuItem>)}
          <Upload>
            <i><svg width="20" height="16" viewBox="0 0 20 16"><g fill="none" stroke="#fff" strokeWidth="2.600"><circle cx="10" cy="4.500" r="3" /><circle cx="5" cy="11" r="3.200" /><circle cx="15" cy="11" r="3.200" /><path d="M7.500 9l5 4" /></g></svg></i>
            <span>拖拽上传</span>
          </Upload>
        </MenuBar>

        <ToolRow $h={24} $gap={2}>
          <Bar>
            <Tools list="new open save print | cut copy paste delete | undo redo | addData v |" />
            <Combo $w={148} $tone="dim"><BlankSelect disabled aria-label="比例尺" /><Chevron dir="down" width={1.2} color="#aaa" /></Combo>
            <Tools list="| editorTool | tableWin catalogWin searchWin toolboxWin pythonWin | model" active="editorTool" />
            <Overflow />
          </Bar>
          <Bar>
            <Tools list="gZoomIn gZoomOut gPan gFull gOne | gIn gOut | gPrev gNext" />
            <Combo $w={60} $tone="dim"><ZoomSelect disabled aria-label="缩放"><option>100%</option></ZoomSelect><Chevron dir="down" width={1.2} color="#aaa" /></Combo>
            <Tools list="| gToggle gFocus change ddp" soft="gToggle" />
            <Overflow />
          </Bar>
          <Bar>
            <Tools list="feLine feArc feSnap feCross feTrim | feBurst feBall | feMove feRotate feTools feAlign feGrid | feUnion feBuffer" />
            <Overflow />
          </Bar>
        </ToolRow>

        <ToolRow $h={26} $gap={3}>
          <Bar>
            <Tools list="zoomIn zoomOut pan globe | fixIn fixOut | prev next | gSelect d gClear | pointer | info bolt popup | measure | find route goXY | clockWin | magWin" active="pan" />
            <Overflow />
          </Bar>
          <Bar>
            <TextTool $w={71}>编辑器(R)</TextTool>
            <Tools list="| gArrow gArrowA | gLine gCurve gTrace d gPoint | gEditV gReshape gCutP gSplit gRot | gAttr gSketch | gCreate" />
            <Overflow />
          </Bar>
          <Bar>
            <Combo $w={180} $tone="sunk"><select disabled aria-label="图层" /><SunkButton /></Combo>
            <Tools list="contrast sun swipe diamond | flick | timer" />
            <Spinner>
              <input defaultValue="500" aria-label="闪烁间隔" />
              <div>
                <button aria-label="增加"><svg width="6" height="3"><path d="M0 3l3-3 3 3z" /></svg></button>
                <button aria-label="减少"><svg width="6" height="3"><path d="M0 0l3 3 3-3z" /></svg></button>
              </div>
            </Spinner>
            <Overflow />
          </Bar>
        </ToolRow>

        <ToolRow $h={28}>
          <Bar>
            <TextTool $w={118}>Network Analyst</TextTool>
            <Tools list="| naWin | na1 na2 na3 na4 |" />
            <Combo $w={180} $tone="grey"><select disabled aria-label="网络数据集" /><Chevron dir="down" width={1.2} color="#999" /></Combo>
            <Tools list="na5 na6" />
            <Overflow />
          </Bar>
          <Bar>
            <TextTool $w={60}>绘制(D)</TextTool>
            <Tools list="pointer rotateC zoomSel | rect v textA v editVert |" />
            <Combo $w={171}><Icon name="fontFile" size={14} /><select aria-label="字体"><option>宋体</option></select><Chevron dir="down" width={1.2} /></Combo>
            <Combo $w={46}><select aria-label="字号"><option>10</option></select><Chevron dir="down" width={1.2} /></Combo>
            <StyleButton $k="b">B</StyleButton>
            <StyleButton $k="i">I</StyleButton>
            <StyleButton $k="u">U</StyleButton>
            <Sep />
            <Tools list="colorA v colorFill v colorLine v colorMark v" wide />
            <Overflow />
          </Bar>
          <Bar>
            <Tools list="topo1 | topo2 d | topo3 topo4 topo5 topo6 | topo7 | val1 val2 | val3 val4" />
            <Overflow />
          </Bar>
        </ToolRow>
      </Top>

      <Body>
        <Panel>
          <Head title="ArcToolbox" />
          <Box>
            <Tree>
              <Node $h={23} $x={5}><Icon name="toolboxRoot" /><Label>ArcToolbox</Label></Node>
              {TOOLBOXES.map(t => (
                <Node key={t} $h={22} $x={8}><Plus /><Icon name={t.startsWith('时空') ? 'toolboxBlue' : 'toolbox'} /><Label>{t}</Label></Node>
              ))}
            </Tree>
            <HRow>
              <HScroll>
                <ScrollButton aria-label="向左"><Chevron dir="left" /></ScrollButton>
                <Thumb $grow={151} /><Space $grow={10} />
                <ScrollButton aria-label="向右"><Chevron dir="right" /></ScrollButton>
              </HScroll>
            </HRow>
          </Box>
        </Panel>

        <Panel>
          <Head title="内容列表" />
          <PanelTools><Tools list="listOrder listSource listVis listSel | options" active="listOrder" /></PanelTools>
          <Box>
            <Tree><Node $h={26} $x={23}><Icon name="layers" /><Label $on>图层</Label></Node></Tree>
          </Box>
          <Results>
            <Head title="结果" />
            <Box>
              <ResultTree>
                <Node $h={18} $x={24}><Icon name="results" size={14} /><Label>当前会话</Label></Node>
                <Node $h={18} $x={24}><Icon name="results" size={14} /><Label>共享</Label></Node>
              </ResultTree>
            </Box>
          </Results>
        </Panel>

        <MapFrame>
          <MapMain>
            <Canvas />
            <VScroll>
              <ScrollButton aria-label="向上"><Chevron dir="up" /></ScrollButton>
              <Thumb $grow={613} /><Space $grow={204} />
              <ScrollButton aria-label="向下"><Chevron dir="down" /></ScrollButton>
            </VScroll>
          </MapMain>
          <MapBar>
            <MapTool $active aria-label="数据视图"><Icon name="dataView" size={14} /></MapTool>
            <MapTool aria-label="布局视图"><Icon name="layoutView" size={14} /></MapTool>
            <Sep />
            <MapTool aria-label="刷新"><Icon name="refresh" size={12} /></MapTool>
            <MapTool aria-label="暂停"><Icon name="pause" size={12} /></MapTool>
            <HScroll>
              <ScrollButton aria-label="向左"><Chevron dir="left" /></ScrollButton>
              <Thumb $grow={343} /><Space $grow={176} />
              <ScrollButton aria-label="向右"><Chevron dir="right" /></ScrollButton>
            </HScroll>
          </MapBar>
        </MapFrame>

        <Panel>
          <Head title="目录" />
          <CatalogTools><Tools list="back d forward up home homeDb | details d | connect | treeView | options" /></CatalogTools>
          <Location>
            <label htmlFor="place">位置:</label>
            <Combo $h={23}><Icon name="folderHome" /><select id="place"><option>默认工作目录 - Documents\ArcGIS</option></select><Chevron dir="down" width={1.2} /></Combo>
          </Location>
          <CatalogBody>
            <CatalogBox>
              <Tree>
                {CATALOG.map((r, i) => (
                  <Node key={i} $h={19} $x={8 + r.depth * 19 + (r.state ? 0 : 15)}>
                    {r.state && <Plus open={r.state === 'open'} />}<Icon name={r.icon} /><Label>{r.text}</Label>
                  </Node>
                ))}
              </Tree>
              <VScroll>
                <ScrollButton aria-label="向上"><Chevron dir="up" /></ScrollButton>
                <Space $grow={138} /><Thumb $grow={494} /><Space $grow={99} />
                <ScrollButton aria-label="向下"><Chevron dir="down" /></ScrollButton>
              </VScroll>
            </CatalogBox>
            <Frame $c="#f00" $x={23} $y={-1} $w={315} $h={668} />
            <Frame $c="#00f" $x={93} $y={34} $w={144} $h={26} />
            <Frame $c="#00f" $x={94} $y={187} $w={145} $h={25} />
            <Arrows width="145" height="170" viewBox="1318 256 145 170">
              <path d="M1326 266L1440 332M1321 412L1436 353" stroke="#f00" strokeWidth="3" />
              <path d="M1459 343l-21-18 2 6-7 5zM1457 343l-28 6 7 4-1 7z" fill="#f00" stroke="#f00" />
            </Arrows>
            <Note>安装名称是否相同<br />合并为同一个图层</Note>
            <Dot />
          </CatalogBody>
          <Tabs>
            <Tab $on><Icon name="catalogWin" />目录</Tab>
            <Tab><Icon name="searchWin" />搜索</Tab>
          </Tabs>
        </Panel>
      </Body>

      <Status><span /><span /><span>301.29  1305.979 未知单位</span></Status>
      <Meter />
    </Shell>
  );
}
